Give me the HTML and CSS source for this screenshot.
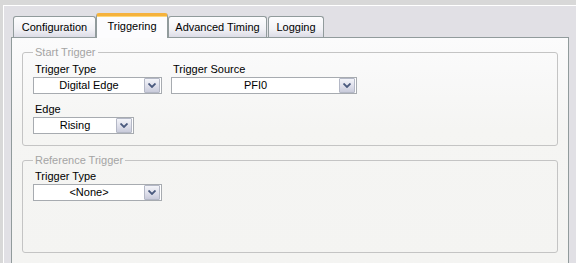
FILE: index.html
```html
<!DOCTYPE html>
<html lang="en">
<head>
    <meta charset="UTF-8">
    <title>Task Settings</title>
    <link rel="stylesheet" href="styles.css">
</head>
<body>
    <div class="frame">
        <div class="tabs">
            <div class="tab tab-config">Configuration</div>
            <div class="tab active">Triggering</div>
            <div class="tab tab-timing">Advanced Timing</div>
            <div class="tab tab-logging">Logging</div>
        </div>
        <div class="panel">
            <fieldset class="group group-start">
                <legend>Start Trigger</legend>
                <div class="row">
                    <div class="field">
                        <label>Trigger Type</label>
                        <div class="combo w-type">
                            <span class="value">Digital Edge</span>
                            <span class="drop"><svg width="8" height="5" viewBox="0 0 8 5"><polyline points="0.5,0.5 4,4 7.5,0.5" fill="none" stroke="#4a5a7e" stroke-width="1.8"/></svg></span>
                        </div>
                    </div>
                    <div class="field">
                        <label>Trigger Source</label>
                        <div class="combo w-source">
                            <span class="value">PFI0</span>
                            <span class="drop"><svg width="8" height="5" viewBox="0 0 8 5"><polyline points="0.5,0.5 4,4 7.5,0.5" fill="none" stroke="#4a5a7e" stroke-width="1.8"/></svg></span>
                        </div>
                    </div>
                </div>
                <div class="row row-edge">
                    <div class="field">
                        <label>Edge</label>
                        <div class="combo w-edge">
                            <span class="value">Rising</span>
                            <span class="drop"><svg width="8" height="5" viewBox="0 0 8 5"><polyline points="0.5,0.5 4,4 7.5,0.5" fill="none" stroke="#4a5a7e" stroke-width="1.8"/></svg></span>
                        </div>
                    </div>
                </div>
            </fieldset>

            <fieldset class="group group-ref">
                <legend>Reference Trigger</legend>
                <div class="row">
                    <div class="field">
                        <label>Trigger Type</label>
                        <div class="combo w-type">
                            <span class="value">&lt;None&gt;</span>
                            <span class="drop"><svg width="8" height="5" viewBox="0 0 8 5"><polyline points="0.5,0.5 4,4 7.5,0.5" fill="none" stroke="#4a5a7e" stroke-width="1.8"/></svg></span>
                        </div>
                    </div>
                </div>
            </fieldset>
        </div>
    </div>
</body>
</html>
```

FILE: styles.css
```css
* {
    box-sizing: border-box;
}

body {
    margin: 0;
    height: 263px;
    overflow: hidden;
    background-color: #d8d8d8;
    font-family: "Liberation Sans", Arial, sans-serif;
    font-size: 11px;
    color: #000;
}

.frame {
    margin: 5px 0 0 3px;
    height: 258px;
    overflow: hidden;
    padding: 7px 0 0 7px;
    border-top: 1px solid #fff;
    border-left: 1px solid #fff;
    background-color: #e1e0e5;
}

.tabs {
    display: flex;
    align-items: flex-end;
    height: 24px;
    margin-left: 2px;
}

.tab {
    height: 21px;
    line-height: 20px;
    text-align: center;
    border: 1px solid #919b9c;
    border-bottom: none;
    border-radius: 3px 3px 0 0;
    background: linear-gradient(#fdfdfe, #f2f2f6 60%, #dcdce6);
}

.tab-config {
    width: 83px;
}

.tab-timing {
    width: 99px;
}

.tab-logging {
    width: 56px;
    margin-left: 1px;
}

.tab.active {
    position: relative;
    z-index: 1;
    width: 72px;
    height: 25px;
    margin-bottom: -1px;
    line-height: 20px;
    border-top: 3px solid #f5b23c;
    background: #fcfcfe;
    box-shadow: inset 0 1px 0 #fdd77a;
}

.panel {
    width: 558px;
    height: 228px;
    padding-top: 8px;
    border: 1px solid #919b9c;
    border-bottom: none;
    background: linear-gradient(#fbfbfc, #f5f5f3 40%, #f4f4f2);
}

.group {
    margin: 0 10px;
    padding: 4px 11px 11px 11px;
    min-inline-size: 0;
    border: 1px solid #c4c4c4;
    border-radius: 3px;
}

.group legend {
    padding: 0 2px;
    margin-left: -1px;
    line-height: 13px;
    color: #a4a4a4;
}

.group-ref {
    margin-top: 8px;
    padding-top: 3px;
    padding-bottom: 51px;
}

.row {
    display: flex;
    gap: 10px;
}

.row-edge {
    margin-top: 9px;
}

.field {
    display: flex;
    flex-direction: column;
}

.field label {
    line-height: 13px;
    margin-bottom: 1px;
    padding-left: 1px;
}

.combo {
    display: flex;
    height: 17px;
    margin-left: -1px;
    border: 1px solid #a7abb0;
    background-color: #fff;
}

.combo .value {
    flex: 1;
    line-height: 15px;
    text-align: center;
}

.combo .drop {
    display: flex;
    align-items: center;
    justify-content: center;
    width: 16px;
    height: 15px;
    margin-right: 1px;
    border: 1px solid #b4b8c6;
    border-radius: 1px;
    background: linear-gradient(#f3f4f9, #dcdde9 60%, #c9cbdb);
}

.w-type {
    width: 129px;
}

.w-source {
    width: 186px;
}

.w-edge {
    width: 101px;
}
```
